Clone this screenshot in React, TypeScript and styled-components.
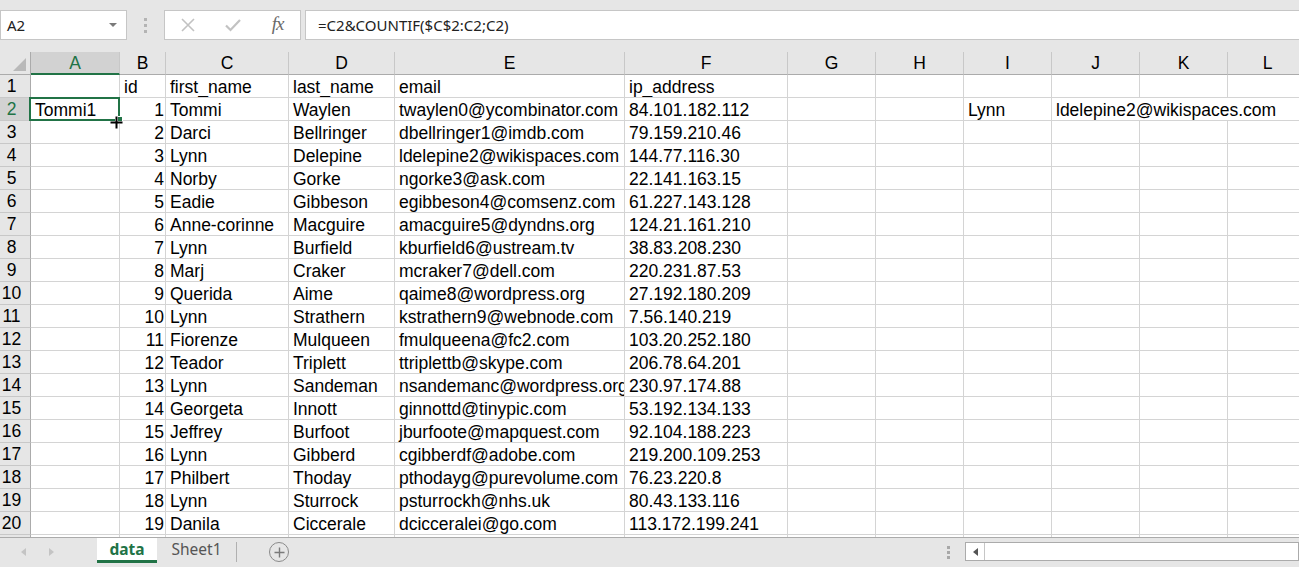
import styled, { createGlobalStyle } from "styled-components";

const GREEN = "#217346";
const GRID = "#d4d4d4";
const CHROME = "#e6e6e6";
const UI_FONT = `"Noto Sans", "Open Sans", sans-serif`;

const GlobalStyle = createGlobalStyle`
  html, body {
    margin: 0;
    padding: 0;
    background: ${CHROME};
  }
  body {
    font-family: "Liberation Sans", Arial, sans-serif;
    overflow: hidden;
  }
`;

const Window = styled.div`
  width: 1299px;
  height: 567px;
  display: flex;
  flex-direction: column;
  overflow: hidden;
  background: ${CHROME};
`;

/* ---------- formula bar ---------- */

const FormulaBar = styled.div`
  flex: none;
  height: 52px;
  box-sizing: border-box;
  padding-top: 10px;
  display: flex;
  align-items: flex-start;
`;

const Box = styled.div`
  height: 30px;
  box-sizing: border-box;
  background: #fff;
  border: 1px solid #c6c6c6;
  display: flex;
  align-items: center;
`;

const NameBox = styled(Box)`
  width: 127px;
  padding: 0 9px 0 6px;
  justify-content: space-between;
  font-family: ${UI_FONT};
  font-size: 15px;
  color: #222;
`;

const DropArrow = styled.span`
  width: 0;
  height: 0;
  border-left: 4px solid transparent;
  border-right: 4px solid transparent;
  border-top: 4px solid #7a7a7a;
`;

const Grip = styled.div`
  width: 37px;
  height: 30px;
  display: flex;
  flex-direction: column;
  align-items: center;
  justify-content: center;
  gap: 3px;

  span {
    width: 3px;
    height: 3px;
    background: #b4b4b4;
  }
`;

const FxGroup = styled(Box)`
  width: 137px;
  display: grid;
  grid-template-columns: repeat(3, 45px);
  justify-items: center;
`;

const FxText = styled.span`
  font-family: "Liberation Serif", "Times New Roman", serif;
  font-style: italic;
  font-size: 19px;
  color: #6a6a6a;
  letter-spacing: -1px;
  margin-top: -2px;
`;

const FormulaInput = styled(Box)`
  flex: 1;
  margin-left: 4px;
  margin-right: -2px;
  padding-left: 12px;
  font-family: ${UI_FONT};
  font-size: 15px;
  color: #222;
`;

/* ---------- sheet ---------- */

const SheetWrap = styled.div`
  position: relative;
  flex: none;
  height: 485px;
  overflow: hidden;
  background: #fff;
`;

const Grid = styled.div`
  display: grid;
  grid-template-columns: 31px 89px 46px 123px 106px 230px 163px 88px 88px 88px 88px 88px 80px;
  grid-auto-rows: 23px;
`;

const Corner = styled.div`
  position: relative;
  background: ${CHROME};
  border-right: 1px solid #ababab;
  border-bottom: 1px solid #ababab;
  box-sizing: border-box;

  &::after {
    content: "";
    position: absolute;
    right: 4px;
    bottom: 3px;
    width: 0;
    height: 0;
    border-left: 13px solid transparent;
    border-bottom: 13px solid #b9b9b9;
  }
`;

const ColHead = styled.div<{ $active?: boolean }>`
  box-sizing: border-box;
  background: ${(p) => (p.$active ? "#d2d2d2" : CHROME)};
  color: ${(p) => (p.$active ? GREEN : "#000")};
  border-right: 1px solid #c8c8c8;
  border-bottom: ${(p) => (p.$active ? `2px solid ${GREEN}` : "1px solid #ababab")};
  display: flex;
  align-items: center;
  justify-content: center;
  font-size: 17.5px;
  padding-top: 1px;
`;

const RowHead = styled.div<{ $active?: boolean }>`
  box-sizing: border-box;
  background: ${(p) => (p.$active ? "#d2d2d2" : CHROME)};
  color: ${(p) => (p.$active ? GREEN : "#000")};
  border-right: 1px solid #ababab;
  border-bottom: 1px solid #c8c8c8;
  display: flex;
  align-items: center;
  justify-content: center;
  padding-right: 7px;
  padding-top: 1px;
  font-size: 17.5px;
`;

const Cell = styled.div<{ $num?: boolean; $span?: number }>`
  box-sizing: border-box;
  border-right: 1px solid ${GRID};
  border-bottom: 1px solid ${GRID};
  grid-column: span ${(p) => p.$span ?? 1};
  padding: 2px ${(p) => (p.$num ? "1px" : "3px")} 0 ${(p) => (p.$num ? "3px" : "4px")};
  text-align: ${(p) => (p.$num ? "right" : "left")};
  font-size: 17.5px;
  line-height: 20px;
  color: #000;
  white-space: nowrap;
  overflow: hidden;
`;

const Selection = styled.div`
  position: absolute;
  left: 29px;
  top: 45px;
  width: 91px;
  height: 24px;
  box-sizing: border-box;
  border: 2px solid ${GREEN};
  pointer-events: none;

  &::after {
    content: "";
    position: absolute;
    right: -5px;
    bottom: -5px;
    width: 6px;
    height: 6px;
    background: ${GREEN};
    border: 1px solid #fff;
  }
`;

const Cursor = styled.svg`
  position: absolute;
  left: 109px;
  top: 63px;
`;

/* ---------- tab bar ---------- */

const TabBar = styled.div`
  flex: 1;
  display: flex;
  align-items: flex-start;
  border-top: 1px solid #ababab;
  font-family: ${UI_FONT};
`;

const Nav = styled.div`
  width: 97px;
  height: 28px;
  display: flex;
  align-items: center;
  padding-left: 21px;
  gap: 23px;
  box-sizing: border-box;
`;

const NavArrow = styled.span<{ $dir: "left" | "right" }>`
  width: 0;
  height: 0;
  border-top: 4px solid transparent;
  border-bottom: 4px solid transparent;
  ${(p) =>
    p.$dir === "left"
      ? "border-right: 5px solid #c4c4c4;"
      : "border-left: 5px solid #c4c4c4;"}
`;

const Tab = styled.div<{ $active?: boolean; $w: number }>`
  width: ${(p) => p.$w}px;
  height: 25px;
  box-sizing: border-box;
  display: flex;
  align-items: center;
  justify-content: center;
  font-size: 15.5px;
  background: ${(p) => (p.$active ? "#fff" : "transparent")};
  color: ${(p) => (p.$active ? GREEN : "#555")};
  font-weight: ${(p) => (p.$active ? 700 : 400)};
  border-bottom: ${(p) => (p.$active ? `3px solid ${GREEN}` : "none")};
  padding-bottom: ${(p) => (p.$active ? "0" : "3px")};
`;

const TabDivider = styled.div`
  width: 1px;
  height: 20px;
  margin-top: 4px;
  background: #b0b0b0;
`;

const AddSheet = styled.div`
  width: 20px;
  height: 20px;
  margin: 4px 0 0 32px;
  box-sizing: border-box;
  border: 1.5px solid #8a8a8a;
  border-radius: 50%;
  display: flex;
  align-items: center;
  justify-content: center;
`;

const Spacer = styled.div`
  flex: 1;
`;

const VDots = styled.div`
  width: 30px;
  height: 28px;
  display: flex;
  flex-direction: column;
  align-items: center;
  justify-content: center;
  gap: 2px;
  margin-right: 2px;

  span {
    width: 3px;
    height: 3px;
    background: #a8a8a8;
  }
`;

const HScroll = styled.div`
  width: 334px;
  height: 19px;
  margin-top: 4px;
  box-sizing: border-box;
  background: #fff;
  border: 1px solid #ababab;
  display: flex;
`;

const ScrollBtn = styled.div`
  width: 19px;
  height: 100%;
  box-sizing: border-box;
  border-right: 1px solid #c6c6c6;
  display: flex;
  align-items: center;
  justify-content: center;

  span {
    width: 0;
    height: 0;
    border-top: 4px solid transparent;
    border-bottom: 4px solid transparent;
    border-right: 5px solid #555;
  }
`;

/* ---------- data ---------- */

const people: [number, string, string, string, string][] = [
  [1, "Tommi", "Waylen", "twaylen0@ycombinator.com", "84.101.182.112"],
  [2, "Darci", "Bellringer", "dbellringer1@imdb.com", "79.159.210.46"],
  [3, "Lynn", "Delepine", "ldelepine2@wikispaces.com", "144.77.116.30"],
  [4, "Norby", "Gorke", "ngorke3@ask.com", "22.141.163.15"],
  [5, "Eadie", "Gibbeson", "egibbeson4@comsenz.com", "61.227.143.128"],
  [6, "Anne-corinne", "Macguire", "amacguire5@dyndns.org", "124.21.161.210"],
  [7, "Lynn", "Burfield", "kburfield6@ustream.tv", "38.83.208.230"],
  [8, "Marj", "Craker", "mcraker7@dell.com", "220.231.87.53"],
  [9, "Querida", "Aime", "qaime8@wordpress.org", "27.192.180.209"],
  [10, "Lynn", "Strathern", "kstrathern9@webnode.com", "7.56.140.219"],
  [11, "Fiorenze", "Mulqueen", "fmulqueena@fc2.com", "103.20.252.180"],
  [12, "Teador", "Triplett", "ttriplettb@skype.com", "206.78.64.201"],
  [13, "Lynn", "Sandeman", "nsandemanc@wordpress.org", "230.97.174.88"],
  [14, "Georgeta", "Innott", "ginnottd@tinypic.com", "53.192.134.133"],
  [15, "Jeffrey", "Burfoot", "jburfoote@mapquest.com", "92.104.188.223"],
  [16, "Lynn", "Gibberd", "cgibberdf@adobe.com", "219.200.109.253"],
  [17, "Philbert", "Thoday", "pthodayg@purevolume.com", "76.23.220.8"],
  [18, "Lynn", "Sturrock", "psturrockh@nhs.uk", "80.43.133.116"],
  [19, "Danila", "Ciccerale", "dcicceralei@go.com", "113.172.199.241"],
];

const columns = ["A", "B", "C", "D", "E", "F", "G", "H", "I", "J", "K", "L"];

function Empty({ n }: { n: number }) {
  return (
    <>
      {Array.from({ length: n }, (_, i) => (
        <Cell key={i} />
      ))}
    </>
  );
}

function Row({
  n,
  id,
  first,
  last,
  email,
  ip,
}: {
  n: number;
  id: number;
  first: string;
  last: string;
  email: string;
  ip: string;
}) {
  const isSecond = n === 2;
  return (
    <>
      <RowHead $active={isSecond}>{n}</RowHead>
      <Cell>{isSecond ? "Tommi1" : ""}</Cell>
      <Cell $num>{id}</Cell>
      <Cell>{first}</Cell>
      <Cell>{last}</Cell>
      <Cell>{email}</Cell>
      <Cell>{ip}</Cell>
      <Cell />
      <Cell />
      <Cell>{isSecond ? "Lynn" : ""}</Cell>
      {isSecond ? <Cell $span={3}>ldelepine2@wikispaces.com</Cell> : <Empty n={3} />}
    </>
  );
}

export default function App() {
  return (
    <Window>
      <GlobalStyle />
      <FormulaBar>
        <NameBox>
          A2
          <DropArrow />
        </NameBox>
        <Grip>
          <span />
          <span />
          <span />
        </Grip>
        <FxGroup>
          <svg width="14" height="14" viewBox="0 0 14 14">
            <path d="M1 1 L13 13 M13 1 L1 13" stroke="#c2c2c2" strokeWidth="1.6" />
          </svg>
          <svg width="16" height="14" viewBox="0 0 16 14">
            <path d="M1 7.5 L5.5 12 L15 2" stroke="#c2c2c2" strokeWidth="2.2" fill="none" />
          </svg>
          <FxText>fx</FxText>
        </FxGroup>
        <FormulaInput>=C2&amp;COUNTIF($C$2:C2;C2)</FormulaInput>
      </FormulaBar>

      <SheetWrap>
        <Grid>
          <Corner />
          {columns.map((c) => (
            <ColHead key={c} $active={c === "A"}>
              {c}
            </ColHead>
          ))}

          <RowHead>1</RowHead>
          <Cell />
          <Cell>id</Cell>
          <Cell>first_name</Cell>
          <Cell>last_name</Cell>
          <Cell>email</Cell>
          <Cell>ip_address</Cell>
          <Empty n={6} />

          {people.map(([id, first, last, email, ip], i) => (
            <Row key={id} n={i + 2} id={id} first={first} last={last} email={email} ip={ip} />
          ))}

          <RowHead>21</RowHead>
          <Empty n={12} />
        </Grid>
        <Selection />
        <Cursor width="15" height="15" viewBox="0 0 15 15">
          <path d="M6 0.5h3v5.5h5.5v3H9v5.5H6V9H0.5V6H6z" fill="#fff" />
          <path d="M7.5 1.5v12 M1.5 7.5h12" stroke="#000" strokeWidth="2" />
        </Cursor>
      </SheetWrap>

      <TabBar>
        <Nav>
          <NavArrow $dir="left" />
          <NavArrow $dir="right" />
        </Nav>
        <Tab $active $w={60}>
          data
        </Tab>
        <Tab $w={79}>Sheet1</Tab>
        <TabDivider />
        <AddSheet>
          <svg width="11" height="11" viewBox="0 0 11 11">
            <path d="M5.5 0.5v10 M0.5 5.5h10" stroke="#7a7a7a" strokeWidth="1.4" />
          </svg>
        </AddSheet>
        <Spacer />
        <VDots>
          <span />
          <span />
          <span />
        </VDots>
        <HScroll>
          <ScrollBtn>
            <span />
          </ScrollBtn>
        </HScroll>
      </TabBar>
    </Window>
  );
}
